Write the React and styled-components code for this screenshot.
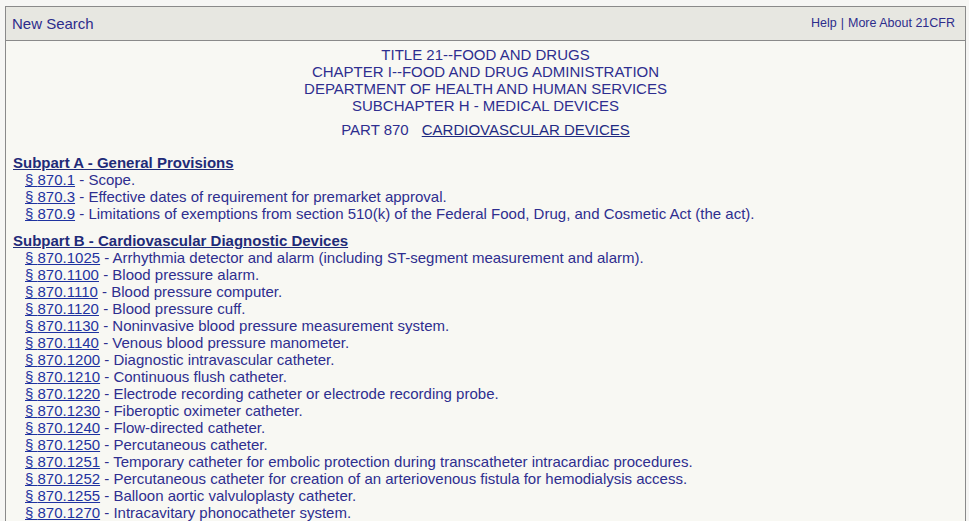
import styled, { createGlobalStyle } from "styled-components";

const GlobalStyle = createGlobalStyle`
  html, body {
    margin: 0;
    padding: 0;
    background: #f6f6f4;
  }
  body {
    font-family: "Liberation Sans", Arial, sans-serif;
  }
`;

const Page = styled.div`
  padding: 6px 3px 0 5px;
`;

const Frame = styled.div`
  border: 1px solid #8a8a8a;
  border-bottom: none;
  background: #f8f8f3;
  min-height: 515px;
`;

const TopBar = styled.div`
  display: flex;
  justify-content: space-between;
  align-items: center;
  height: 33px;
  padding: 0 10px 0 6px;
  background: #e7e7e1;
  border-bottom: 1px solid #8a8a8a;
`;

const BarLink = styled.a`
  color: #2d2d8c;
  text-decoration: none;
  font-size: ${(p) => (p.$small ? "12.5px" : "15px")};
`;

const BarRight = styled.div`
  display: flex;
  gap: 4px;
  color: #2d2d8c;
  font-size: 12.5px;
  margin-top: -1px;
`;

const Content = styled.div`
  padding: 5px 7px 0 7px;
  color: #2e2e8f;
  font-size: 15px;
  line-height: 17px;
`;

const TitleBlock = styled.div`
  text-align: center;
`;

const TitleLine = styled.div``;

const PartLine = styled.div`
  margin-top: 7px;
  display: flex;
  justify-content: center;
  gap: 13px;
`;

const PartLink = styled.a`
  color: #1f2b82;
  text-decoration: underline;
`;

const Subpart = styled.div`
  margin-top: ${(p) => (p.$first ? "16px" : "10px")};
`;

const SubpartTitle = styled.a`
  display: inline-block;
  color: #1f2b78;
  font-weight: bold;
  text-decoration: underline;
`;

const Row = styled.div`
  padding-left: 12px;
  white-space: nowrap;
`;

const SectionLink = styled.a`
  color: #1f33a0;
  text-decoration: underline;
`;

const subparts = [
  {
    title: "Subpart A - General Provisions",
    items: [
      ["870.1", "Scope."],
      ["870.3", "Effective dates of requirement for premarket approval."],
      [
        "870.9",
        "Limitations of exemptions from section 510(k) of the Federal Food, Drug, and Cosmetic Act (the act).",
      ],
    ],
  },
  {
    title: "Subpart B - Cardiovascular Diagnostic Devices",
    items: [
      [
        "870.1025",
        "Arrhythmia detector and alarm (including ST-segment measurement and alarm).",
      ],
      ["870.1100", "Blood pressure alarm."],
      ["870.1110", "Blood pressure computer."],
      ["870.1120", "Blood pressure cuff."],
      ["870.1130", "Noninvasive blood pressure measurement system."],
      ["870.1140", "Venous blood pressure manometer."],
      ["870.1200", "Diagnostic intravascular catheter."],
      ["870.1210", "Continuous flush catheter."],
      ["870.1220", "Electrode recording catheter or electrode recording probe."],
      ["870.1230", "Fiberoptic oximeter catheter."],
      ["870.1240", "Flow-directed catheter."],
      ["870.1250", "Percutaneous catheter."],
      [
        "870.1251",
        "Temporary catheter for embolic protection during transcatheter intracardiac procedures.",
      ],
      [
        "870.1252",
        "Percutaneous catheter for creation of an arteriovenous fistula for hemodialysis access.",
      ],
      ["870.1255", "Balloon aortic valvuloplasty catheter."],
      ["870.1270", "Intracavitary phonocatheter system."],
    ],
  },
];

export default function App() {
  return (
    <Page>
      <GlobalStyle />
      <Frame>
        <TopBar>
          <BarLink href="#">New Search</BarLink>
          <BarRight>
            <BarLink $small href="#">Help</BarLink>
            <span>|</span>
            <BarLink $small href="#">More About 21CFR</BarLink>
          </BarRight>
        </TopBar>
        <Content>
          <TitleBlock>
            <TitleLine>TITLE 21--FOOD AND DRUGS</TitleLine>
            <TitleLine>CHAPTER I--FOOD AND DRUG ADMINISTRATION</TitleLine>
            <TitleLine>DEPARTMENT OF HEALTH AND HUMAN SERVICES</TitleLine>
            <TitleLine>SUBCHAPTER H - MEDICAL DEVICES</TitleLine>
            <PartLine>
              <span>PART 870</span>
              <PartLink href="#">CARDIOVASCULAR DEVICES</PartLink>
            </PartLine>
          </TitleBlock>
          {subparts.map((sp, i) => (
            <Subpart key={sp.title} $first={i === 0}>
              <SubpartTitle href="#">{sp.title}</SubpartTitle>
              {sp.items.map(([num, text]) => (
                <Row key={num}>
                  <SectionLink href="#">§ {num}</SectionLink> - {text}
                </Row>
              ))}
            </Subpart>
          ))}
        </Content>
      </Frame>
    </Page>
  );
}
